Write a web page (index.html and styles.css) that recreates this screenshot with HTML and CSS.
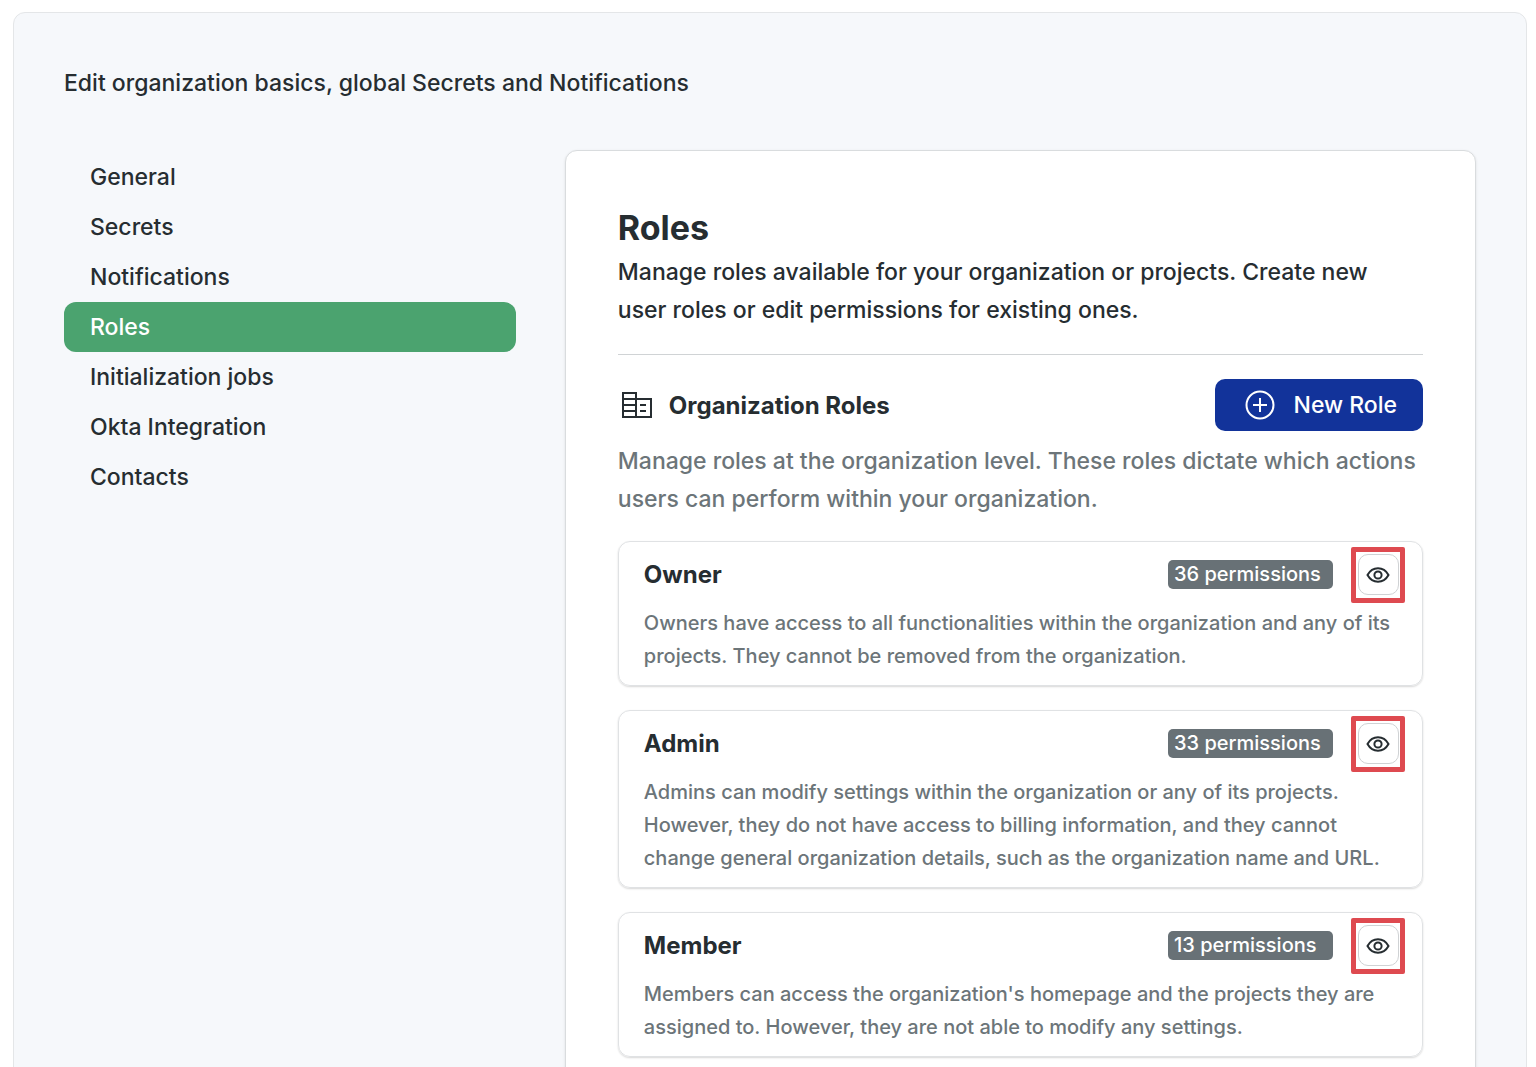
FILE: index.html
```html
<!DOCTYPE html>
<html lang="en">
<head>
    <meta charset="UTF-8">
    <meta name="viewport" content="width=device-width, initial-scale=1.0">
    <title>Organization settings</title>
    <link rel="stylesheet" href="styles.css">
</head>
<body>
    <!-- shared icon -->
    <svg class="sprite" aria-hidden="true">
        <symbol id="eye" viewBox="0 0 24 24">
            <path d="M1.500 12C4 7.500 7.800 5.300 12 5.300S20 7.500 22.500 12C20 16.500 16.200 18.700 12 18.700S4 16.500 1.500 12Z"/>
            <circle cx="12" cy="12" r="3.600"/>
        </symbol>
    </svg>

    <div class="settings">
        <p class="intro">Edit organization basics, global Secrets and Notifications</p>

        <div class="columns">
            <nav class="menu">
                <a href="#general">General</a>
                <a href="#secrets">Secrets</a>
                <a href="#notifications">Notifications</a>
                <a href="#roles" class="active">Roles</a>
                <a href="#jobs">Initialization jobs</a>
                <a href="#okta">Okta Integration</a>
                <a href="#contacts">Contacts</a>
            </nav>

            <main class="panel">
                <h1>Roles</h1>
                <p class="lead">Manage roles available for your organization or projects. Create new user roles or edit permissions for existing ones.</p>
                <hr>

                <div class="section-header">
                    <svg class="building" viewBox="0 0 30 26" aria-hidden="true">
                        <path d="M1 1H14V25H1ZM14 7H29V25H14M1 7H14M1 13H14M1 19H14M18 13H24M18 19H24"/>
                    </svg>
                    <h2>Organization Roles</h2>
                    <button class="new-role">
                        <svg viewBox="0 0 30 30" aria-hidden="true">
                            <circle cx="15" cy="15" r="13.500"/>
                            <path d="M15 8V22M8 15H22"/>
                        </svg>
                        New Role
                    </button>
                </div>
                <p class="lead muted">Manage roles at the organization level. These roles dictate which actions users can perform within your organization.</p>

                <div class="roles">
                    <section class="role">
                        <div class="role-header">
                            <h3>Owner</h3>
                            <span class="badge">36 permissions</span>
                            <span class="highlight">
                                <button class="view" aria-label="View Owner"><svg><use href="#eye"/></svg></button>
                            </span>
                        </div>
                        <p>Owners have access to all functionalities within the organization and any of its projects. They cannot be removed from the organization.</p>
                    </section>

                    <section class="role">
                        <div class="role-header">
                            <h3>Admin</h3>
                            <span class="badge">33 permissions</span>
                            <span class="highlight">
                                <button class="view" aria-label="View Admin"><svg><use href="#eye"/></svg></button>
                            </span>
                        </div>
                        <p>Admins can modify settings within the organization or any of its projects. However, they do not have access to billing information, and they cannot change general organization details, such as the organization name and URL.</p>
                    </section>

                    <section class="role">
                        <div class="role-header">
                            <h3>Member</h3>
                            <span class="badge">13 permissions</span>
                            <span class="highlight">
                                <button class="view" aria-label="View Member"><svg><use href="#eye"/></svg></button>
                            </span>
                        </div>
                        <p>Members can access the organization's homepage and the projects they are assigned to. However, they are not able to modify any settings.</p>
                    </section>
                </div>
            </main>
        </div>
    </div>
</body>
</html>
```
FILE: styles.css
```css
* {
    box-sizing: border-box;
}

body {
    margin: 0;
    padding: 12px 9px 0 13px;
    height: 100vh;
    overflow: hidden;
    background-color: white;
    color: #262d31;
    font-family: Inter, "Liberation Sans", sans-serif;
    font-size: 23px;
    font-weight: 450;
}

h1, h2, h3, p {
    margin: 0;
}

button {
    font: inherit;
    cursor: pointer;
}

svg {
    fill: none;
    stroke: currentColor;
    stroke-width: 2;
}

.sprite {
    display: none;
}

.settings {
    min-height: 100vh;
    padding: 50px 50px 60px;
    background-color: #f6f8fb;
    border: 1px solid #e4e6e8;
    border-radius: 12px;
}

.intro {
    line-height: 40px;
}

/* menu on the left, content on the right */
.columns {
    display: grid;
    grid-template-columns: 32% 1fr;
    gap: 49px;
    align-items: start;
    margin-top: 47px;
}

.menu {
    display: flex;
    flex-direction: column;
    padding-top: 2px;
}

.menu a {
    padding: 0 26px;
    line-height: 50px;
    color: inherit;
    text-decoration: none;
    border-radius: 12px;
}

.menu .active {
    background-color: #4ba36f;
    color: white;
}

.panel {
    padding: 52px;
    background-color: white;
    border: 1px solid #d9dcde;
    border-radius: 12px;
    box-shadow: 0 1px 3px rgba(0, 0, 0, 0.1);
}

h1 {
    font-size: 34px;
    line-height: 50px;
}

.lead {
    padding-right: 4px;
    line-height: 38px;
}

.muted {
    color: #6c7579;
}

hr {
    margin: 25px 0 24px;
    border: none;
    border-top: 1px solid #d0d3d5;
}

.section-header {
    display: flex;
    align-items: center;
    margin-bottom: 11px;
}

.building {
    width: 30px;
    height: 26px;
    margin: 0 17px 0 4px;
}

h2 {
    flex: 1;
    font-size: 24px;
    font-weight: 650;
}

.new-role {
    display: flex;
    align-items: center;
    gap: 18px;
    height: 52px;
    padding: 0 26px 0 30px;
    border: none;
    border-radius: 10px;
    background-color: #12339a;
    color: white;
}

.new-role svg {
    width: 30px;
    height: 30px;
}

.roles {
    display: flex;
    flex-direction: column;
    gap: 24px;
    margin-top: 23px;
}

.role {
    padding: 0 17px 12px 25px;
    border: 1px solid #e0e2e4;
    border-radius: 12px;
    box-shadow: 0 1px 2px rgba(0, 0, 0, 0.16);
}

.role-header {
    display: flex;
    align-items: center;
    gap: 18px;
    height: 65px;
}

h3 {
    flex: 1;
    font-size: 24px;
    font-weight: 650;
}

.badge {
    min-width: 165px;
    padding: 0 11px 0 6px;
    border-radius: 5px;
    background-color: #687176;
    color: white;
    font-size: 20px;
    line-height: 29px;
}

/* red frame round the view button */
.highlight {
    display: flex;
    align-items: center;
    justify-content: center;
    width: 54px;
    height: 56px;
    border: 5px solid #de4a50;
    border-radius: 2px;
}

.view {
    display: flex;
    align-items: center;
    justify-content: center;
    width: 41px;
    height: 41px;
    padding: 0;
    border: 1px solid #cfd2d4;
    border-radius: 10px;
    background-color: white;
    color: #262d31;
}

.view svg {
    width: 24px;
    height: 24px;
}

.role p {
    color: #6c7579;
    font-size: 20px;
    line-height: 33px;
}
```
